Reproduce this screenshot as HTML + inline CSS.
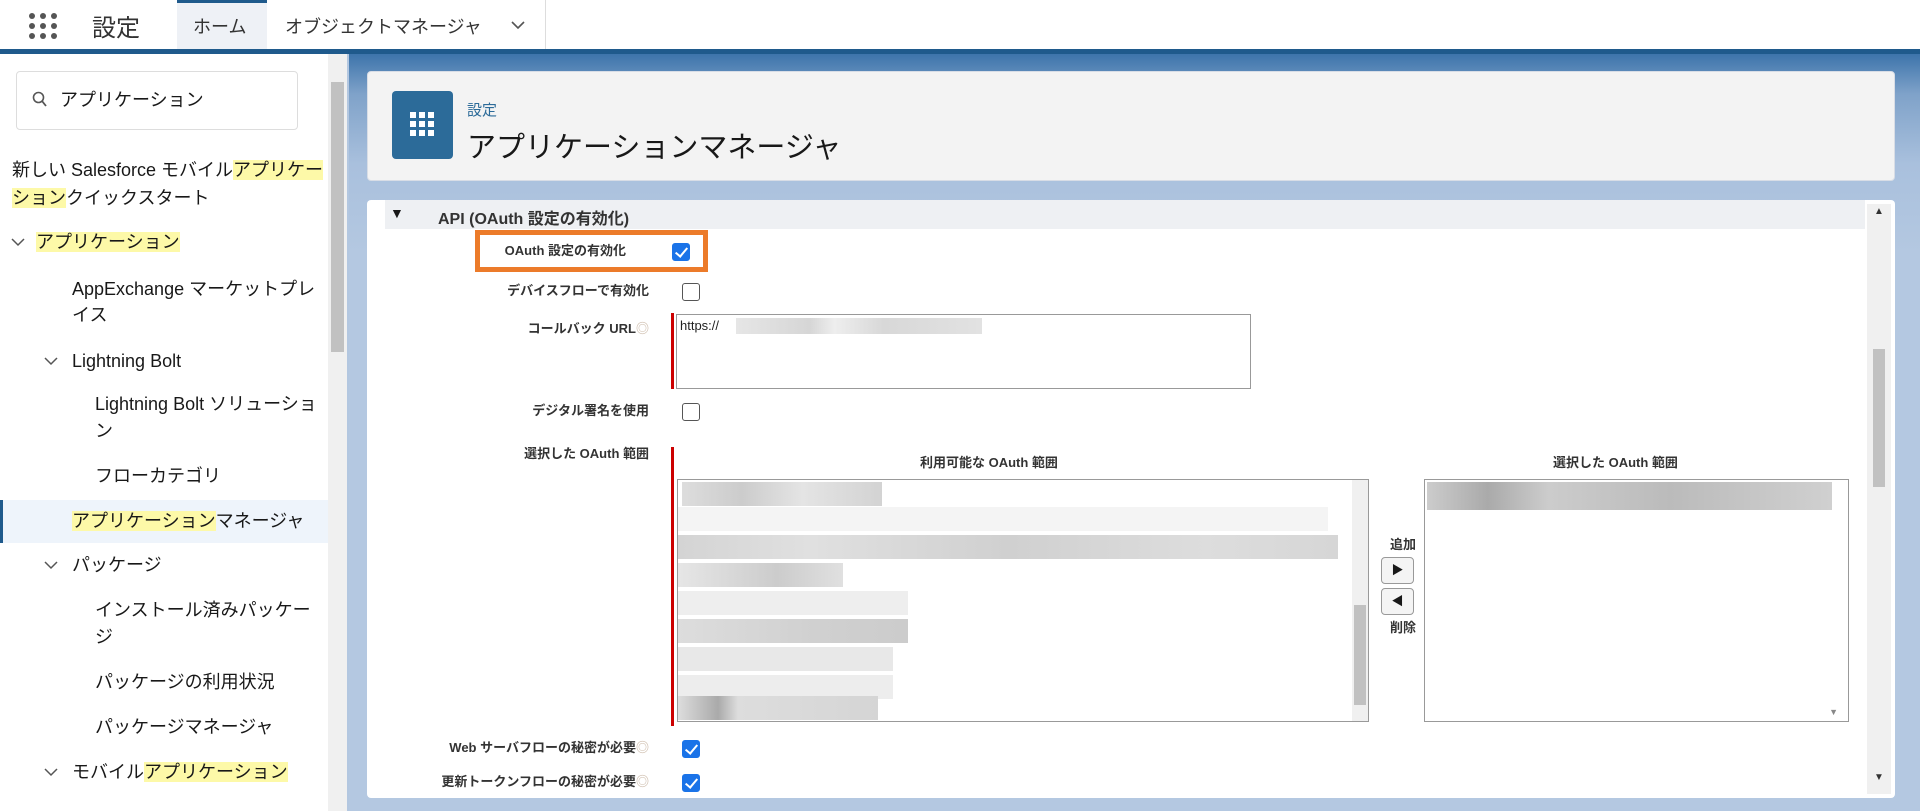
<!DOCTYPE html>
<html><head><meta charset="utf-8"><style>
*{margin:0;padding:0;box-sizing:border-box}
body{width:1920px;height:811px;overflow:hidden;font-family:"Liberation Sans","Noto Sans CJK JP",sans-serif;background:#b3c7e0;position:relative;color:#181818}
.abs{position:absolute}
.hdr{left:0;top:0;width:1920px;height:49px;background:#fff}
.bar{left:0;top:49px;width:1920px;height:5px;background:#1f5a8c}
.main{left:349px;top:54px;width:1571px;height:757px;background:linear-gradient(#3d74ab 0px,#7fa2c9 40px,#a9c0dd 110px,#b4c8e1 200px)}
.side{left:0;top:54px;width:328px;height:757px;background:#fff}
.sb{left:328px;top:54px;width:19px;height:757px;background:#f0f0f0}
.si{position:absolute;font-size:18px;line-height:27px;color:#181818;white-space:nowrap}
.hl{background:#fdf9a8}
.chev{position:absolute}
.lbl{position:absolute;font-size:13px;font-weight:bold;color:#333;text-align:right;width:300px;left:349px;white-space:nowrap}
.cb{position:absolute;width:18px;height:18px;border:1.5px solid #555;border-radius:3px;background:#fff;left:682px}
.cbc{background:#1a73e8;border-color:#1a73e8}
.cbc:after{content:"";position:absolute;left:5px;top:1px;width:5px;height:10px;border:solid #fff;border-width:0 2.5px 2.5px 0;transform:rotate(40deg)}
.gr{position:absolute;height:24px}
</style></head><body>
<div class="abs hdr"></div>
<svg class="abs" style="left:28px;top:13px" width="30" height="26" viewBox="0 0 30 26"><g fill="#555">
<circle cx="4" cy="3" r="3"/><circle cx="15" cy="3" r="3"/><circle cx="26" cy="3" r="3"/>
<circle cx="4" cy="13" r="3"/><circle cx="15" cy="13" r="3"/><circle cx="26" cy="13" r="3"/>
<circle cx="4" cy="23" r="3"/><circle cx="15" cy="23" r="3"/><circle cx="26" cy="23" r="3"/></g></svg>
<div class="abs" style="left:92px;top:8px;font-size:24px;color:#333">設定</div>
<div class="abs" style="left:177px;top:0;width:90px;height:49px;background:#eef1f6;border-top:3px solid #1f5a8c"></div>
<div class="abs" style="left:193px;top:13px;font-size:18px;color:#333">ホーム</div>
<div class="abs" style="left:285px;top:13px;font-size:18px;color:#333">オブジェクトマネージャ</div>
<svg class="abs" style="left:510px;top:20px" width="16" height="10"><path d="M2 2 L8 8 L14 2" stroke="#555" stroke-width="1.6" fill="none"/></svg>
<div class="abs" style="left:545px;top:0;width:1px;height:49px;background:#ddd"></div>
<div class="abs bar"></div>
<div class="abs main"></div>
<div class="abs side"></div>
<div class="abs sb"><div style="position:absolute;left:3px;top:28px;width:13px;height:270px;background:#c1c1c1"></div></div>
<div class="abs" style="left:16px;top:71px;width:282px;height:59px;border:1px solid #ddd;border-radius:4px;background:#fff"></div>
<svg class="abs" style="left:32px;top:91px" width="16" height="18"><circle cx="6.5" cy="6.5" r="5" stroke="#555" stroke-width="1.6" fill="none"/><path d="M10 10 L14 15" stroke="#555" stroke-width="1.8"/></svg>
<div class="si" style="left:60px;top:87px">アプリケーション</div>
<div class="si" style="left:12px;top:157px">新しい Salesforce モバイル<span class="hl">アプリケー</span></div>
<div class="si" style="left:12px;top:185px"><span class="hl">ション</span>クイックスタート</div>
<svg class="chev" style="left:11px;top:238px" width="14" height="9"><path d="M1 1 L7 7 L13 1" stroke="#555" stroke-width="1.5" fill="none"/></svg>
<div class="si" style="left:36px;top:229px"><span class="hl">アプリケーション</span></div>
<div class="si" style="left:72px;top:276px">AppExchange マーケットプレ</div>
<div class="si" style="left:72px;top:302px">イス</div>
<svg class="chev" style="left:44px;top:357px" width="14" height="9"><path d="M1 1 L7 7 L13 1" stroke="#555" stroke-width="1.5" fill="none"/></svg>
<div class="si" style="left:72px;top:348px">Lightning Bolt</div>
<div class="si" style="left:95px;top:391px">Lightning Bolt ソリューショ</div>
<div class="si" style="left:95px;top:418px">ン</div>
<div class="si" style="left:95px;top:463px">フローカテゴリ</div>
<div class="abs" style="left:0;top:500px;width:328px;height:43px;background:#eef4fb;border-left:3px solid #1f5a8c"></div>
<div class="si" style="left:72px;top:508px"><span class="hl">アプリケーション</span>マネージャ</div>
<svg class="chev" style="left:44px;top:561px" width="14" height="9"><path d="M1 1 L7 7 L13 1" stroke="#555" stroke-width="1.5" fill="none"/></svg>
<div class="si" style="left:72px;top:552px">パッケージ</div>
<div class="si" style="left:95px;top:597px">インストール済みパッケー</div>
<div class="si" style="left:95px;top:624px">ジ</div>
<div class="si" style="left:95px;top:669px">パッケージの利用状況</div>
<div class="si" style="left:95px;top:714px">パッケージマネージャ</div>
<svg class="chev" style="left:44px;top:768px" width="14" height="9"><path d="M1 1 L7 7 L13 1" stroke="#555" stroke-width="1.5" fill="none"/></svg>
<div class="si" style="left:72px;top:759px">モバイル<span class="hl">アプリケーション</span></div>

<div class="abs" style="left:367px;top:71px;width:1528px;height:110px;background:#f3f3f3;border-radius:4px;border:1px solid #d8dde6"></div>
<div class="abs" style="left:392px;top:91px;width:61px;height:68px;background:#2c6b99;border-radius:4px"></div>
<svg class="abs" style="left:410px;top:112px" width="25" height="25"><g fill="#fff">
<rect x="0" y="0" width="6" height="6"/><rect x="9" y="0" width="6" height="6"/><rect x="18" y="0" width="6" height="6"/>
<rect x="0" y="9" width="6" height="6"/><rect x="9" y="9" width="6" height="6"/><rect x="18" y="9" width="6" height="6"/>
<rect x="0" y="18" width="6" height="6"/><rect x="9" y="18" width="6" height="6"/><rect x="18" y="18" width="6" height="6"/></g></svg>
<div class="abs" style="left:467px;top:99px;font-size:15px;color:#2c6b99">設定</div>
<div class="abs" style="left:467px;top:124px;font-size:29px;color:#181818">アプリケーションマネージャ</div>

<div class="abs" style="left:367px;top:200px;width:1528px;height:598px;background:#fff;border-radius:4px"></div>
<div class="abs" style="left:385px;top:200px;width:1480px;height:29px;background:#eef0f3"></div>
<div class="abs" style="left:390px;top:205px;font-size:14px">▼</div>
<div class="abs" style="left:438px;top:205px;font-size:16px;font-weight:bold;color:#333">API (OAuth 設定の有効化)</div>
<div class="abs" style="left:1867px;top:204px;width:24px;height:590px;background:#f0f0f0"></div>
<div class="abs" style="left:1873px;top:349px;width:12px;height:138px;background:#c1c1c1"></div>
<div class="abs" style="left:1874px;top:206px;font-size:10px;color:#333">▲</div>
<div class="abs" style="left:1874px;top:772px;font-size:10px;color:#333">▼</div>

<div class="abs" style="left:475px;top:230px;width:233px;height:42px;border:5px solid #ec7b2a"></div>
<div class="lbl" style="top:240px;left:326px">OAuth 設定の有効化</div>
<div class="cb cbc" style="top:243px;left:672px"></div>
<div class="lbl" style="top:280px">デバイスフローで有効化</div>
<div class="cb" style="top:283px"></div>
<div class="lbl" style="top:318px">コールバック URL<span style="color:#cba">◎</span></div>
<div class="abs" style="left:671px;top:313px;width:3px;height:76px;background:#c00"></div>
<div class="abs" style="left:676px;top:314px;width:575px;height:75px;border:1px solid #999;background:#fff"></div>
<div class="abs" style="left:680px;top:318px;font-size:13px;color:#222">https://</div>
<div class="abs" style="left:736px;top:318px;width:246px;height:16px;background:linear-gradient(90deg,#e6e6e6,#d6d6d6 30%,#eee 40%,#d8d8d8 60%,#e2e2e2)"></div>
<div class="lbl" style="top:400px">デジタル署名を使用</div>
<div class="cb" style="top:403px"></div>
<div class="lbl" style="top:443px">選択した OAuth 範囲</div>
<div class="abs" style="left:671px;top:447px;width:3px;height:279px;background:#c00"></div>
<div class="abs" style="left:920px;top:452px;font-size:13px;font-weight:bold;color:#333">利用可能な OAuth 範囲</div>
<div class="abs" style="left:1553px;top:452px;font-size:13px;font-weight:bold;color:#333">選択した OAuth 範囲</div>
<div class="abs" style="left:677px;top:479px;width:692px;height:243px;border:1px solid #999;background:#fff;overflow:hidden">
<div class="gr" style="left:4px;top:2px;width:200px;background:linear-gradient(90deg,#ddd,#ccc 30%,#e4e4e4 60%,#d3d3d3)"></div>
<div class="gr" style="left:0;top:27px;width:650px;background:#f4f4f4"></div>
<div class="gr" style="left:0;top:55px;width:660px;background:linear-gradient(90deg,#d4d4d4,#e0e0e0 20%,#d0d0d0 50%,#ddd 80%,#d6d6d6)"></div>
<div class="gr" style="left:0;top:83px;width:165px;background:linear-gradient(90deg,#e6e6e6,#ccc 60%,#e0e0e0)"></div>
<div class="gr" style="left:0;top:111px;width:230px;background:#eee"></div>
<div class="gr" style="left:0;top:139px;width:230px;background:linear-gradient(90deg,#ddd,#d0d0d0 60%,#ccc)"></div>
<div class="gr" style="left:0;top:167px;width:215px;background:#e8e8e8"></div>
<div class="gr" style="left:0;top:195px;width:215px;background:#ededed"></div>
<div class="gr" style="left:0;top:216px;width:200px;background:linear-gradient(90deg,#ddd,#aaa 20%,#ddd 30%,#d5d5d5)"></div>
<div style="position:absolute;right:0;top:0;width:16px;height:243px;background:#f0f0f0"><div style="position:absolute;left:2px;top:125px;width:12px;height:100px;background:#c1c1c1"></div></div>
</div>
<div class="abs" style="left:1390px;top:534px;font-size:13px;font-weight:bold;color:#333">追加</div>
<div class="abs" style="left:1381px;top:557px;width:33px;height:27px;border:1px solid #999;border-radius:4px;background:#f4f4f4;font-size:12px;text-align:center;line-height:25px">▶</div>
<div class="abs" style="left:1381px;top:588px;width:33px;height:27px;border:1px solid #999;border-radius:4px;background:#f4f4f4;font-size:12px;text-align:center;line-height:25px">◀</div>
<div class="abs" style="left:1390px;top:617px;font-size:13px;font-weight:bold;color:#333">削除</div>
<div class="abs" style="left:1424px;top:479px;width:425px;height:243px;border:1px solid #999;background:#fff">
<div style="position:absolute;left:2px;top:2px;width:405px;height:28px;background:linear-gradient(90deg,#ccc,#aaa 15%,#ccc 30%,#bbb 60%,#d0d0d0)"></div>
<div style="position:absolute;right:10px;bottom:4px;font-size:9px;color:#888">▼</div></div>
<div class="lbl" style="top:737px">Web サーバフローの秘密が必要<span style="color:#cba">◎</span></div>
<div class="cb cbc" style="top:740px"></div>
<div class="lbl" style="top:771px">更新トークンフローの秘密が必要<span style="color:#cba">◎</span></div>
<div class="cb cbc" style="top:774px"></div>
</body></html>
